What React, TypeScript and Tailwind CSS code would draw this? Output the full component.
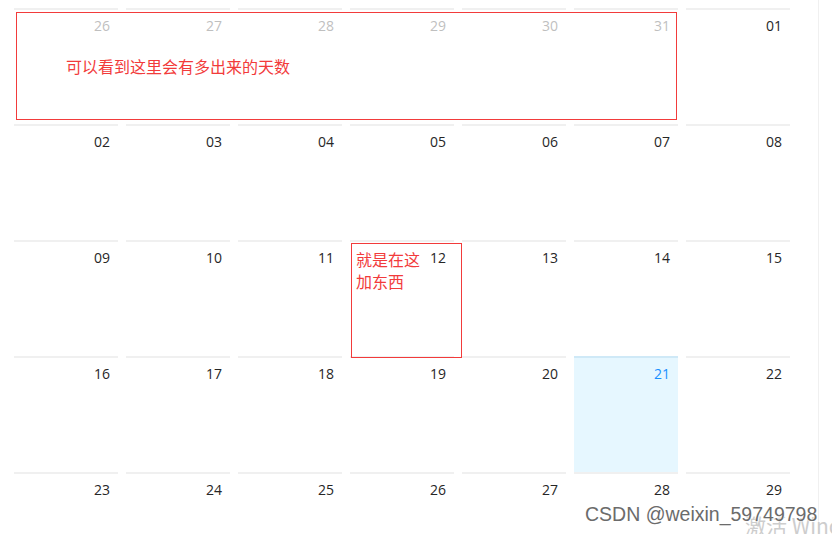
import React from 'react';

type Day = { label: string; outside?: boolean; today?: boolean };

const rows: Day[][] = [
  [
    { label: '26', outside: true },
    { label: '27', outside: true },
    { label: '28', outside: true },
    { label: '29', outside: true },
    { label: '30', outside: true },
    { label: '31', outside: true },
    { label: '01' },
  ],
  ['02', '03', '04', '05', '06', '07', '08'].map((d) => ({ label: d })),
  ['09', '10', '11', '12', '13', '14', '15'].map((d) => ({ label: d })),
  ['16', '17', '18', '19', '20', '21', '22'].map((d) => ({ label: d, today: d === '21' })),
  ['23', '24', '25', '26', '27', '28', '29'].map((d) => ({ label: d })),
];

function Cell({ day }: { day: Day }) {
  return (
    <div
      className={`mx-1 h-[116px] shrink-0 border-t-2 px-2 pt-1 ${
        day.today ? 'border-[#cfe9f7] bg-[#e6f7ff]' : 'border-[#f0f0f0] bg-white'
      }`}
    >
      <div
        className={`text-right text-sm leading-6 ${
          day.today ? 'text-[#1890ff]' : day.outside ? 'text-[#bfbfbf]' : 'text-[#262626]'
        }`}
      >
        {day.label}
      </div>
    </div>
  );
}

export default function App() {
  return (
    <div
      className="relative flex h-[534px] w-[832px] overflow-hidden bg-white"
      style={{ fontFamily: '"Open Sans", "Noto Sans CJK SC", sans-serif' }}
    >
      {/* 日历主体 */}
      <div className="w-[818px] shrink-0 pl-[10px] pt-2">
        <div className="grid grid-cols-[repeat(7,112px)]">
          {rows.flat().map((day, i) => (
            <Cell key={i} day={day} />
          ))}
        </div>
      </div>
      <div className="h-full w-px shrink-0 bg-[#f0f0f0]" />

      {/* 标注 */}
      <div className="absolute left-[16px] top-[12px] h-[108px] w-[661px] border border-[#f23b3b]">
        <div className="pl-[49px] pt-[44px] text-base leading-5 text-[#f23b3b]">
          可以看到这里会有多出来的天数
        </div>
      </div>
      <div className="absolute left-[351px] top-[243px] h-[115px] w-[111px] border border-[#f23b3b]">
        <div className="w-[68px] pl-1 pt-[5px] text-base leading-[22px] text-[#f23b3b]">
          就是在这加东西
        </div>
      </div>

      {/* 水印 */}
      <div
        className="absolute left-[745px] top-[513px] whitespace-nowrap text-[21px] leading-6 text-[#cdcdcd]"
        style={{ fontFamily: '"Noto Sans CJK SC", "Liberation Sans", sans-serif' }}
      >
        激活 Windows
      </div>
      <div
        className="absolute left-[585px] top-[502px] whitespace-nowrap text-[19.5px] leading-6 text-[#6b6b6b] [text-shadow:0_0_2px_#fff,0_0_2px_#fff]"
        style={{ fontFamily: '"Liberation Sans", sans-serif' }}
      >
        CSDN @weixin_59749798
      </div>
    </div>
  );
}
